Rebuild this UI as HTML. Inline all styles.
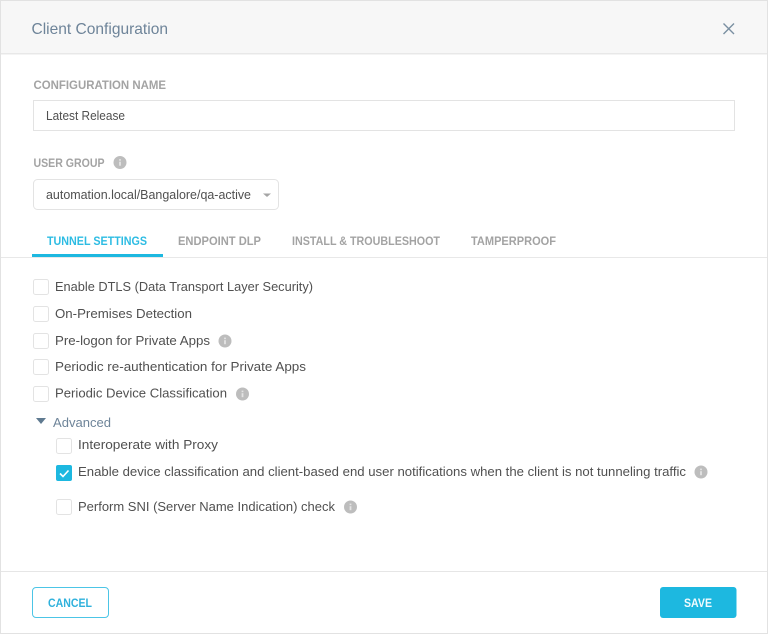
<!DOCTYPE html>
<html><head><meta charset="utf-8"><title>Client Configuration</title>
<style>
html,body{margin:0;padding:0;background:#fff;width:768px;height:634px;overflow:hidden}
svg{display:block;font-family:"Liberation Sans",sans-serif;filter:blur(0.35px)}
.b{font-size:13px;fill:#505050}
.h{font-size:12px;font-weight:bold;fill:#a3a3a3}
.t{font-size:12px;font-weight:bold;fill:#a3a3a3}
.c{fill:#fff;stroke:#e3e3e3;stroke-width:1}
</style></head><body>
<svg width="768" height="634" viewBox="0 0 768 634" xmlns="http://www.w3.org/2000/svg">
<defs>
<g id="i"><circle r="6.5" fill="#bdbdbd"/><rect x="-0.9" y="-0.8" width="1.8" height="4" fill="#e4e4e4"/><rect x="-0.9" y="-3.4" width="1.8" height="1.6" fill="#e4e4e4"/></g>
</defs>
<rect x="0" y="0" width="768" height="634" fill="#fff"/>
<rect x="1" y="1" width="766" height="52" fill="#f7f7f7"/>
<rect x="0.5" y="0.5" width="767" height="633" fill="none" stroke="#e2e2e2"/>
<rect x="1" y="53" width="766" height="1.5" fill="#e8e8e8"/>
<text x="31.5" y="34" font-size="16" fill="#6e8499" textLength="136.5" lengthAdjust="spacingAndGlyphs">Client Configuration</text>
<path d="M723.5 23.5L734 34M734 23.5L723.5 34" stroke="#7a8fa1" stroke-width="1.4" fill="none"/>

<text class="h" x="33.5" y="89" textLength="132.5" lengthAdjust="spacingAndGlyphs">CONFIGURATION NAME</text>
<rect class="c" x="33.5" y="100.5" width="701" height="30"/>
<text class="b" x="46" y="120" textLength="79" lengthAdjust="spacingAndGlyphs">Latest Release</text>

<text class="h" x="33.5" y="167" textLength="71" lengthAdjust="spacingAndGlyphs">USER GROUP</text>
<use href="#i" x="120" y="162.5"/>
<rect class="c" x="33.5" y="179.5" width="245" height="30" rx="4"/>
<text class="b" x="46" y="199" textLength="205" lengthAdjust="spacingAndGlyphs">automation.local/Bangalore/qa-active</text>
<path d="M263 193.5h8l-4 3.5z" fill="#a5a5a5"/>

<text class="t" x="47" y="245" style="fill:#2dbce3" textLength="100" lengthAdjust="spacingAndGlyphs">TUNNEL SETTINGS</text>
<text class="t" x="178" y="245" textLength="83" lengthAdjust="spacingAndGlyphs">ENDPOINT DLP</text>
<text class="t" x="292" y="245" textLength="148" lengthAdjust="spacingAndGlyphs">INSTALL &amp; TROUBLESHOOT</text>
<text class="t" x="471" y="245" textLength="85" lengthAdjust="spacingAndGlyphs">TAMPERPROOF</text>
<rect x="1" y="257" width="766" height="1" fill="#e8e8e8"/>
<rect x="32" y="254" width="131" height="3" fill="#1db8e0"/>

<rect class="c" x="33.5" y="279.5" width="15" height="15" rx="2"/>
<text class="b" x="55" y="291" textLength="258" lengthAdjust="spacingAndGlyphs">Enable DTLS (Data Transport Layer Security)</text>
<rect class="c" x="33.5" y="306.5" width="15" height="15" rx="2"/>
<text class="b" x="55" y="318" textLength="137" lengthAdjust="spacingAndGlyphs">On-Premises Detection</text>
<rect class="c" x="33.5" y="333.5" width="15" height="15" rx="2"/>
<text class="b" x="55" y="345" textLength="155" lengthAdjust="spacingAndGlyphs">Pre-logon for Private Apps</text>
<use href="#i" x="225" y="341"/>
<rect class="c" x="33.5" y="359.5" width="15" height="15" rx="2"/>
<text class="b" x="55" y="371" textLength="251" lengthAdjust="spacingAndGlyphs">Periodic re-authentication for Private Apps</text>
<rect class="c" x="33.5" y="386.5" width="15" height="15" rx="2"/>
<text class="b" x="55" y="397.5" textLength="172" lengthAdjust="spacingAndGlyphs">Periodic Device Classification</text>
<use href="#i" x="242.5" y="394"/>

<path d="M36 418h10l-5 6z" fill="#5f7a90"/>
<text x="53" y="427" font-size="13" fill="#6e8499" textLength="58" lengthAdjust="spacingAndGlyphs">Advanced</text>

<rect class="c" x="56.5" y="438.5" width="15" height="15" rx="2"/>
<text class="b" x="78" y="449" textLength="140" lengthAdjust="spacingAndGlyphs">Interoperate with Proxy</text>
<rect x="56" y="465" width="16" height="16" rx="2" fill="#1db8e0"/>
<path d="M60 473.5l3 3 5.5-6" stroke="#fff" stroke-width="1.6" fill="none"/>
<text class="b" x="78" y="476" textLength="608" lengthAdjust="spacingAndGlyphs">Enable device classification and client-based end user notifications when the client is not tunneling traffic</text>
<use href="#i" x="701" y="472"/>
<rect class="c" x="56.5" y="499.5" width="15" height="15" rx="2"/>
<text class="b" x="78" y="511" textLength="257" lengthAdjust="spacingAndGlyphs">Perform SNI (Server Name Indication) check</text>
<use href="#i" x="350.5" y="507"/>

<rect x="1" y="571" width="766" height="1" fill="#e6e6e6"/>
<rect x="32.5" y="587.5" width="76" height="30" rx="3.5" fill="#fff" stroke="#4cc5e6"/>
<text x="48" y="607" font-size="12" font-weight="bold" fill="#2fb1dc" textLength="44" lengthAdjust="spacingAndGlyphs">CANCEL</text>
<rect x="660" y="587" width="76.5" height="31" rx="3" fill="#1db8e0"/>
<text x="684" y="607" font-size="12" font-weight="bold" fill="#f2fbfe" textLength="28" lengthAdjust="spacingAndGlyphs">SAVE</text>
</svg>
</body></html>
